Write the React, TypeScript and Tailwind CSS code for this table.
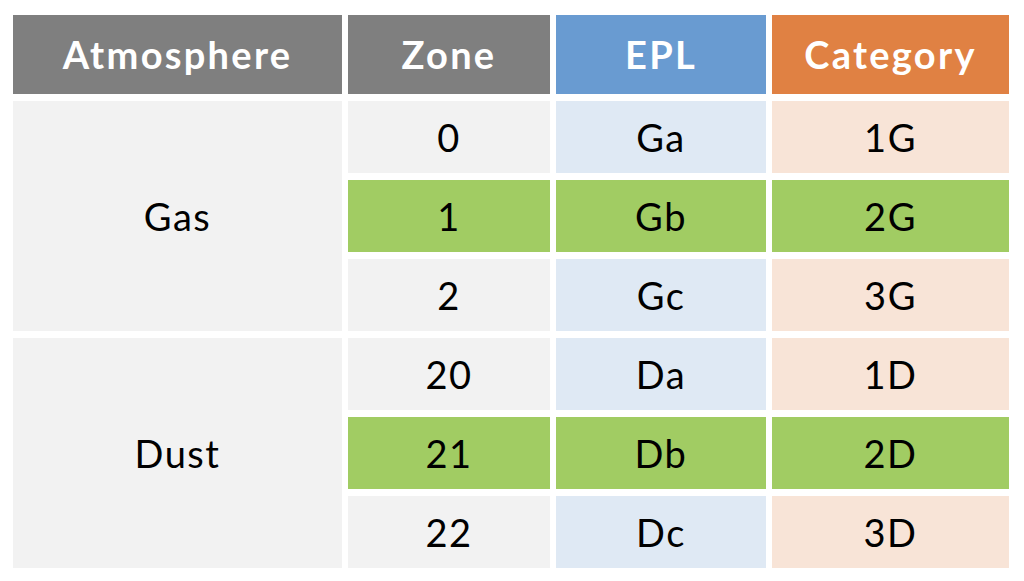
import React from "react";

type Row = { zone: string; epl: string; cat: string; hi?: boolean };

const groups: { name: string; rows: Row[] }[] = [
  {
    name: "Gas",
    rows: [
      { zone: "0", epl: "Ga", cat: "1G" },
      { zone: "1", epl: "Gb", cat: "2G", hi: true },
      { zone: "2", epl: "Gc", cat: "3G" },
    ],
  },
  {
    name: "Dust",
    rows: [
      { zone: "20", epl: "Da", cat: "1D" },
      { zone: "21", epl: "Db", cat: "2D", hi: true },
      { zone: "22", epl: "Dc", cat: "3D" },
    ],
  },
];

const cell =
  "flex items-center justify-center text-[38px] tracking-[0.04em] text-black";
const head =
  "flex items-center justify-center text-white font-bold text-[38px] tracking-[0.06em]";

export default function App() {
  return (
    <div
      className="w-[1024px] h-[581px] bg-white pt-[15px] pl-[13px]"
      style={{ fontFamily: "Lato, 'Open Sans', sans-serif" }}
    >
      <div className="grid grid-cols-[329px_202px_210px_237px] grid-rows-[79px_repeat(6,72px)] gap-x-[6px] gap-y-[7px]">
        {/* header */}
        <div className={head + " bg-[#7f7f7f]"}>Atmosphere</div>
        <div className={head + " bg-[#7f7f7f]"}>Zone</div>
        <div className={head + " bg-[#699bd1]"}>EPL</div>
        <div className={head + " bg-[#e08143]"}>Category</div>

        {groups.map((g) =>
          g.rows.map((r, i) => (
            <React.Fragment key={g.name + r.zone}>
              {i === 0 && (
                <div className={cell + " row-span-3 bg-[#f2f2f2]"}>{g.name}</div>
              )}
              <div className={cell + (r.hi ? " bg-[#a1cc63]" : " bg-[#f2f2f2]")}>
                {r.zone}
              </div>
              <div className={cell + (r.hi ? " bg-[#a1cc63]" : " bg-[#dfe9f4]")}>
                {r.epl}
              </div>
              <div className={cell + (r.hi ? " bg-[#a1cc63]" : " bg-[#f8e4d7]")}>
                {r.cat}
              </div>
            </React.Fragment>
          )),
        )}
      </div>
    </div>
  );
}
